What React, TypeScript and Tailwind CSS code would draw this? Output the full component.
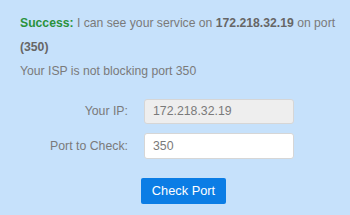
import React from "react";

export default function App() {
  return (
    <div className="w-[350px] h-[215px] bg-[#c6e1fb] pl-[20px] pr-[10px] pt-[11px] overflow-hidden" style={{ fontFamily: '"Liberation Sans", Arial, sans-serif' }}>
      <p className="text-[12.2px] leading-[24px] text-[#7a7a7a]">
        <span className="font-bold text-[#2a923b]">Success:</span> I can see your service on{" "}
        <span className="font-bold text-[#666666]">172.218.32.19</span> on port{" "}
        <span className="font-bold text-[#666666]">(350)</span>
      </p>
      <p className="text-[12.2px] leading-[24px] text-[#7a7a7a]">Your ISP is not blocking port 350</p>
      <div className="mt-[16px] flex flex-col gap-[9px]">
        <div className="flex items-center">
          <label className="w-[108px] text-right text-[12.3px] text-[#7a7a7a]">Your IP:</label>
          <div className="ml-[16px] w-[150px] h-[25px] rounded-[3px] border border-[#d6d6d6] bg-[#eeeeee] flex items-center px-[8px] text-[12.3px] text-[#7a7a7a]">
            172.218.32.19
          </div>
        </div>
        <div className="flex items-center">
          <label className="w-[108px] text-right text-[12.3px] text-[#7a7a7a]">Port to Check:</label>
          <div className="ml-[16px] w-[150px] h-[26px] rounded-[3px] border border-[#d6d6d6] bg-white flex items-center px-[8px] text-[12.3px] text-[#7a7a7a]">
            350
          </div>
        </div>
      </div>
      <div className="mt-[19px] pl-[121px]">
        <button className="w-[85px] h-[26px] rounded-[2px] bg-[#0b7de5] text-white text-[12.8px]">Check Port</button>
      </div>
    </div>
  );
}
